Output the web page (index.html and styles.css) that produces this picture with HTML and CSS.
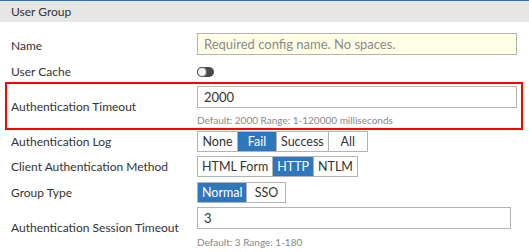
FILE: index.html
```html
<!DOCTYPE html>
<html lang="en">
<head>
  <meta charset="UTF-8">
  <title>User Group</title>
  <link rel="stylesheet" href="styles.css">
</head>
<body>

  <div class="section-title">User Group</div>

  <form class="form">
    <!-- Name -->
    <div class="row row-name">
      <label class="label" for="name">Name</label>
      <div class="field">
        <input class="text-input required" id="name" type="text" placeholder="Required config name. No spaces.">
      </div>
    </div>

    <!-- User Cache -->
    <div class="row row-cache">
      <label class="label">User Cache</label>
      <div class="field">
        <span class="toggle"><span class="knob"></span></span>
      </div>
    </div>

    <!-- Authentication Timeout (highlighted) -->
    <div class="row row-tall highlight">
      <label class="label" for="authTimeout">Authentication Timeout</label>
      <div class="field">
        <input class="text-input" id="authTimeout" type="text" value="2000">
        <div class="help">Default: 2000 Range: 1-120000 milliseconds</div>
      </div>
    </div>

    <!-- Authentication Log -->
    <div class="row row-btn row-log">
      <label class="label">Authentication Log</label>
      <div class="field">
        <div class="btn-group">
          <span class="btn">None</span><span class="btn active">Fail</span><span class="btn">Success</span><span class="btn">All</span>
        </div>
      </div>
    </div>

    <!-- Client Authentication Method -->
    <div class="row row-btn row-client">
      <label class="label">Client Authentication Method</label>
      <div class="field">
        <div class="btn-group">
          <span class="btn">HTML Form</span><span class="btn active">HTTP</span><span class="btn">NTLM</span>
        </div>
      </div>
    </div>

    <!-- Group Type -->
    <div class="row row-btn row-type">
      <label class="label">Group Type</label>
      <div class="field">
        <div class="btn-group">
          <span class="btn active">Normal</span><span class="btn">SSO</span>
        </div>
      </div>
    </div>

    <!-- Authentication Session Timeout -->
    <div class="row row-tall row-session">
      <label class="label" for="sessionTimeout">Authentication Session Timeout</label>
      <div class="field">
        <input class="text-input short" id="sessionTimeout" type="text" value="3">
        <div class="help">Default: 3 Range: 1-180</div>
      </div>
    </div>
  </form>

</body>
</html>
```

FILE: styles.css
```css
body {
  margin: 0;
  font-family: Lato, "Open Sans", sans-serif;
  font-size: 12px;
  color: #333;
  background-color: #fff;
}
.section-title {
  border-top: 1px solid #2f6fb3;
  background-color: #e6e6e6;
  height: 21px;
  line-height: 21px;
  padding-left: 11px;
  font-size: 12px;
  color: #333;
}
.form {
  margin: 0 6px 0 5px;
}
.row {
  display: flex;
  align-items: center;
  padding: 0 6px;
}
.label {
  width: 186px;
  flex: none;
}
.field {
  flex: 1;
  min-width: 0;
}
.row-name {
  margin-top: 11px;
  height: 22px;
}
.row-name .label {
  padding-top: 2px;
}
.row-cache {
  margin-top: 6px;
  height: 21px;
}
.row-tall {
  padding-top: 2px;
  padding-bottom: 2px;
}
.highlight {
  border: 2px solid #f00;
  padding-left: 4px;
  padding-right: 4px;
}
.text-input {
  display: block;
  box-sizing: border-box;
  width: 100%;
  height: 22px;
  padding: 0 6px;
  border: 1px solid #b3b3b3;
  border-radius: 0;
  background-color: #fff;
  font-family: inherit;
  font-size: 13px;
  color: #333;
  outline: none;
}
.text-input.required {
  background-color: #ffffe6;
}
.text-input.required::placeholder {
  color: #8a8a8a;
}
.text-input.short {
  width: calc(100% - 6px);
}
.help {
  margin-top: 6px;
  font-size: 10px;
  line-height: 12px;
  color: #888;
}
.toggle {
  display: block;
  position: relative;
  width: 17px;
  height: 10px;
  border-radius: 5px;
  background-color: #4a4a4a;
}
.knob {
  position: absolute;
  left: 0;
  top: 0;
  width: 10px;
  height: 10px;
  border-radius: 50%;
  background-color: #f4f4f4;
  box-shadow: 0 0 0 1px #4a4a4a inset;
}
.row-btn {
  height: 21px;
}
.row-log {
  margin-top: 1px;
}
.row-client {
  margin-top: 4px;
}
.row-type {
  margin-top: 5px;
}
.row-session {
  margin-top: 2px;
}
.row-session .help {
  margin-top: 7px;
}
.btn-group {
  display: inline-flex;
  border: 1px solid #b3b3b3;
  height: 21px;
  box-sizing: border-box;
}
.btn {
  min-width: 39px;
  padding: 0 4px;
  box-sizing: border-box;
  line-height: 19px;
  text-align: center;
  font-size: 12.5px;
  background-color: #fff;
  color: #333;
  border-left: 1px solid #b3b3b3;
}
.btn:first-child {
  border-left: none;
}
.btn.active {
  background-color: #2f77bb;
  color: #fff;
}
```
